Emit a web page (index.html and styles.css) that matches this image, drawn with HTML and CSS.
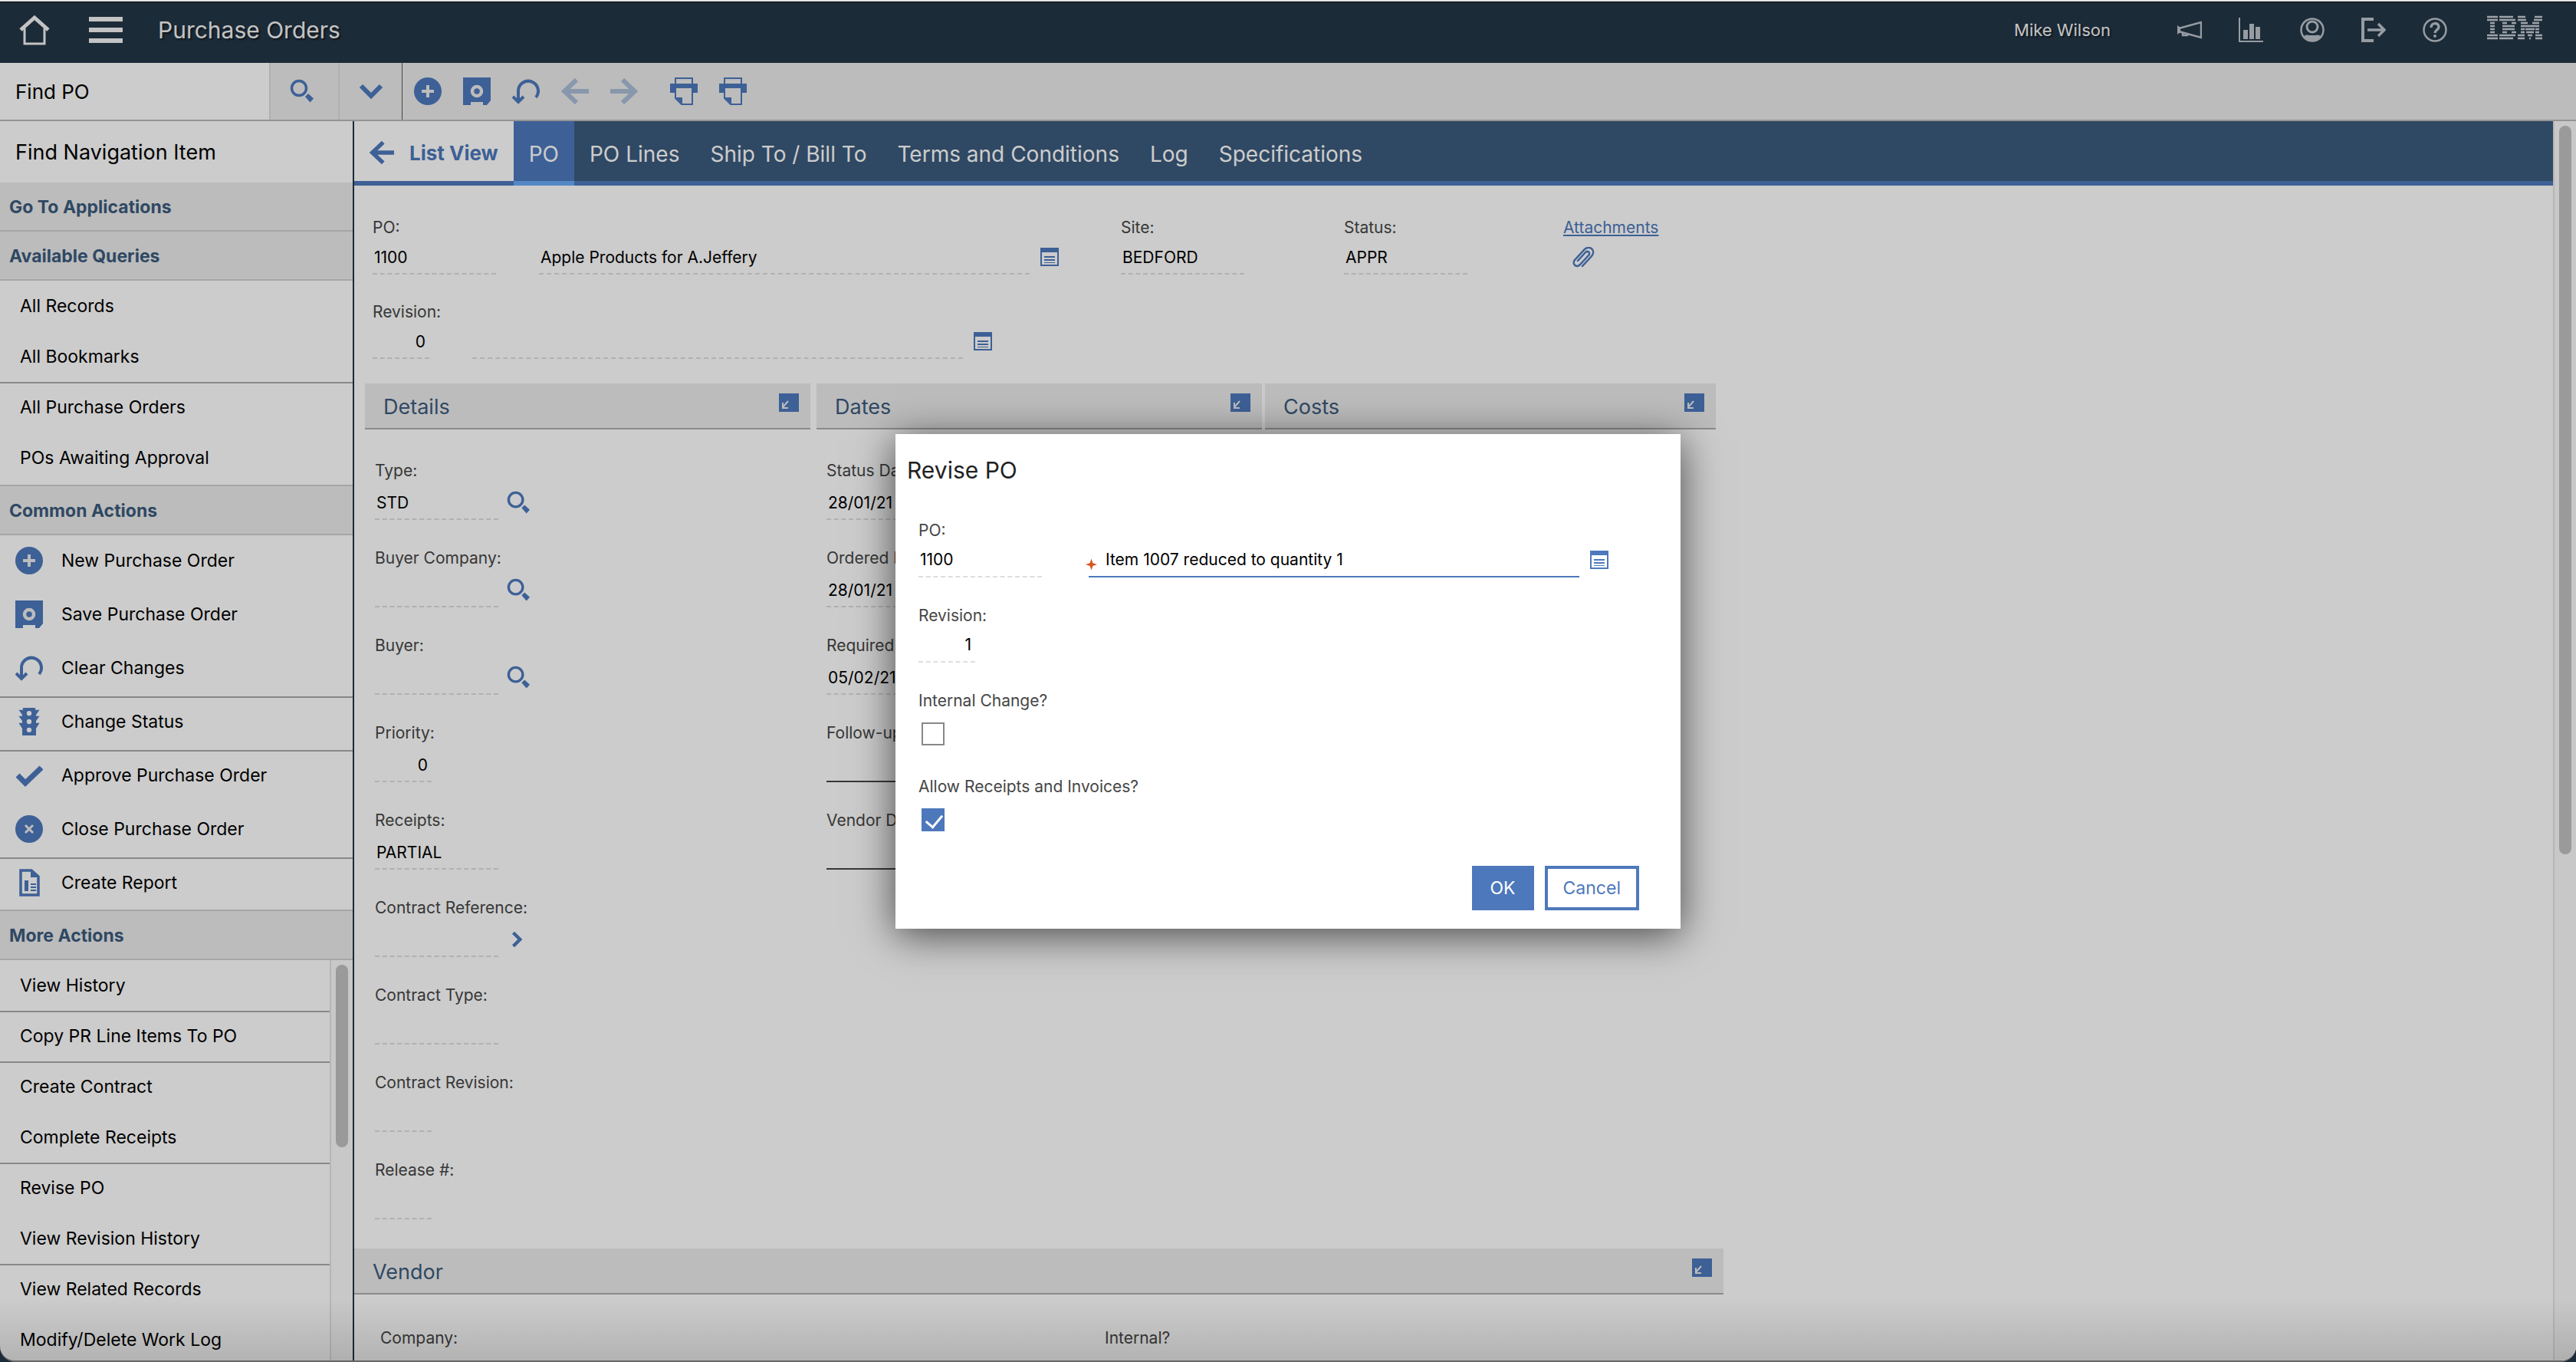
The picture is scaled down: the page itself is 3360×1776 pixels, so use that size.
FILE: index.html
```html
<!DOCTYPE html>
<html lang="en">
  <head>
    <meta charset="UTF-8" />
    <meta name="viewport" content="width=device-width, initial-scale=1.0" />
    <title>Purchase Orders</title>
    <link rel="stylesheet" href="styles.css">
  </head>
  <body>
    <!-- Shared icons -->
    <svg class="sprite" aria-hidden="true">
      <symbol id="i-home" viewBox="0 0 40 40"><path d="M7 18v20h26V18" fill="none" stroke="currentColor" stroke-width="3" /><path d="M2 20 20 4l18 16" fill="none" stroke="currentColor" stroke-width="5" /></symbol>
      <symbol id="i-menu" viewBox="0 0 44 36"><path d="M0 4h44M0 18h44M0 32h44" stroke="currentColor" stroke-width="6" /></symbol>
      <symbol id="i-search" viewBox="0 0 32 32"><circle cx="12" cy="12" r="9.5" fill="none" stroke="currentColor" stroke-width="3.5" /><path d="m20 23 4-4 7 6.500-4.500 5z" fill="currentColor" /></symbol>
      <symbol id="i-down" viewBox="0 0 32 32"><path d="m3 9 13 13L29 9" fill="none" stroke="currentColor" stroke-width="6" /></symbol>
      <symbol id="i-right" viewBox="0 0 20 20"><path d="m5 2 8 8-8 8" fill="none" stroke="currentColor" stroke-width="4" /></symbol>
      <symbol id="i-plus" viewBox="0 0 36 36"><circle cx="18" cy="18" r="18" fill="currentColor" /><path d="M18 10v16M10 18h16" stroke="#ececec" stroke-width="4" /></symbol>
      <symbol id="i-close" viewBox="0 0 36 36"><circle cx="18" cy="18" r="18" fill="currentColor" /><path d="m13 13 10 10M23 13 13 23" stroke="#ececec" stroke-width="3" /></symbol>
      <symbol id="i-safe" viewBox="0 0 36 36"><path d="M0 0h36v30l-5 6h-5v-4H10v4H0z" fill="currentColor" /><circle cx="18" cy="18" r="6" fill="none" stroke="#ececec" stroke-width="4.5" /></symbol>
      <symbol id="i-undo" viewBox="0 0 36 36"><path d="M8 32V17a13 13 0 1 1 23 9" fill="none" stroke="currentColor" stroke-width="4" /><path d="m1 25 7 7 7-7" fill="none" stroke="currentColor" stroke-width="4" /></symbol>
      <symbol id="i-back" viewBox="0 0 36 36"><path d="M36 18H4M20 3 4 18l16 15" fill="none" stroke="currentColor" stroke-width="6" /></symbol>
      <symbol id="i-forward" viewBox="0 0 36 36"><path d="M0 18h32M16 3l16 15-16 15" fill="none" stroke="currentColor" stroke-width="6" /></symbol>
      <symbol id="i-print" viewBox="0 0 36 36"><path d="M7 9V1h22v8" fill="none" stroke="currentColor" stroke-width="2" /><path d="M0 8h36v12h-6v-6H7v6H0z" fill="currentColor" /><path d="M7 14v13l8 8h14V14" fill="none" stroke="currentColor" stroke-width="2" /><path d="M7 26h9v9z" fill="currentColor" /></symbol>
      <symbol id="i-status" viewBox="0 0 36 40"><path d="M9 0h18v3h6l-5 7v2h5l-5 7v3h5l-5 8v10H8V30l-5-8h5v-3l-5-7h5v-2L3 3h6z" fill="currentColor" /><g fill="#fff"><circle cx="18" cy="8" r="3.500" /><circle cx="18" cy="20" r="3.500" /><circle cx="18" cy="32" r="3.500" /></g></symbol>
      <symbol id="i-check" viewBox="0 0 36 36"><path d="m3 18 10 10L34 8" fill="none" stroke="currentColor" stroke-width="7" /></symbol>
      <symbol id="i-report" viewBox="0 0 36 36"><path d="M7 2h14l9 8v24H7z" fill="none" stroke="currentColor" stroke-width="3.500" /><path d="M20 2v9h10zM12 15h5v14h-5zM20 19h7v2h-7zM20 23h7v2h-7zM20 27h7v2h-7z" fill="currentColor" /></symbol>
      <symbol id="i-note" viewBox="0 0 24 24"><path d="M1 1h22v22H1z" fill="none" stroke="currentColor" stroke-width="2" /><path d="M1 1h22v5H1zM5 11h14v2H5zM5 15h14v2H5zM5 19h14v1H5z" fill="currentColor" /></symbol>
      <symbol id="i-collapse" viewBox="0 0 26 24"><path d="M0 0h26v24H0z" fill="currentColor" /><path d="m12 10-7 8M5 12v7h7" fill="none" stroke="#ececec" stroke-width="2" /></symbol>
      <symbol id="i-clip" viewBox="0 0 30 30"><path d="m8 18 10-11c3-3 7 1 4 4L11 23c-5 5-11-1-7-6L17 3c7-6 15 2 9 9L14 25" fill="none" stroke="currentColor" stroke-width="2.500" stroke-linecap="round" /></symbol>
      <symbol id="i-megaphone" viewBox="0 0 32 32"><path d="M2 14 31 6v20L2 18z" fill="none" stroke="currentColor" stroke-width="2.500" /><path d="M0 10v12l4-3v-6z" fill="currentColor" /><path d="M7 19v4h6v-3" fill="none" stroke="currentColor" stroke-width="2.500" /></symbol>
      <symbol id="i-chart" viewBox="0 0 32 32"><path d="M1 0v31h31" fill="none" stroke="currentColor" stroke-width="2" /><path d="M6 16h6v12H6zM14 8h6v20h-6zM22 12h6v16h-6z" fill="currentColor" /></symbol>
      <symbol id="i-user" viewBox="0 0 32 32"><circle cx="16" cy="16" r="14.500" fill="none" stroke="currentColor" stroke-width="2.500" /><circle cx="16" cy="12" r="7" fill="none" stroke="currentColor" stroke-width="3" /><path d="M4 26c2-4 5-4 8-3h8c3-1 6-1 8 3-6 7-18 7-24 0z" fill="currentColor" /></symbol>
      <symbol id="i-logout" viewBox="0 0 32 32"><path d="M16 2H2v28h14" fill="none" stroke="currentColor" stroke-width="4" /><path d="M8 16h22M22 8l8 8-8 8" fill="none" stroke="currentColor" stroke-width="3.500" /></symbol>
      <symbol id="i-help" viewBox="0 0 32 32"><circle cx="16" cy="16" r="14.500" fill="none" stroke="currentColor" stroke-width="2.500" /><path d="M11 13c0-7 10-7 10-1 0 4-5 4-5 8" fill="none" stroke="currentColor" stroke-width="3.500" /><circle cx="16" cy="24" r="2" fill="currentColor" /></symbol>
      <symbol id="i-required" viewBox="0 0 16 16"><path d="m8 0 2 6 6 2-6 2-2 6-2-6-6-2 6-2z" fill="#d9541e" /></symbol>
    </svg>

    <div class="app">
      <header class="header">
        <button class="icon-btn header-btn" aria-label="Home"><svg class="home"><use href="#i-home" /></svg></button>
        <button class="icon-btn header-btn" aria-label="Menu"><svg class="menu"><use href="#i-menu" /></svg></button>
        <h1>Purchase Orders</h1>
        <span class="user-name">Mike Wilson</span>
        <div class="header-icons">
          <button class="icon-btn" aria-label="Bulletins"><svg><use href="#i-megaphone" /></svg></button>
          <button class="icon-btn" aria-label="Reports"><svg><use href="#i-chart" /></svg></button>
          <button class="icon-btn" aria-label="Profile"><svg><use href="#i-user" /></svg></button>
          <button class="icon-btn" aria-label="Sign out"><svg><use href="#i-logout" /></svg></button>
          <button class="icon-btn" aria-label="Help"><svg><use href="#i-help" /></svg></button>
        </div>
        <!-- eight-bar logo, one row per bar -->
        <svg class="logo" viewBox="0 0 72 32" role="img" aria-label="IBM">
          <path d="M0 2h14M16 2h18M40 2h10M62 2h10" />
          <path d="M0 6h14M16 6h21M40 6h11M61 6h11" />
          <path d="M4 10h6M20 10h6M32 10h6M44 10h9M59 10h9" />
          <path d="M4 14h6M20 14h16M44 14h24" />
          <path d="M4 18h6M20 18h16M44 18h5M50 18h12M63 18h5" />
          <path d="M4 22h6M20 22h6M32 22h6M44 22h5M51 22h10M63 22h5" />
          <path d="M0 26h14M16 26h21M40 26h9M53 26h6M63 26h9" />
          <path d="M0 30h14M16 30h18M40 30h9M55 30h2M63 30h9" />
        </svg>
      </header>

      <div class="toolbar">
        <input class="find" type="text" value="Find PO" aria-label="Find PO" />
        <button class="tool-btn search-btn" aria-label="Search"><svg><use href="#i-search" /></svg></button>
        <button class="tool-btn more-btn" aria-label="Search options"><svg><use href="#i-down" /></svg></button>
        <div class="tools">
          <button class="icon-btn" aria-label="New"><svg><use href="#i-plus" /></svg></button>
          <button class="icon-btn" aria-label="Save"><svg><use href="#i-safe" /></svg></button>
          <button class="icon-btn" aria-label="Clear"><svg><use href="#i-undo" /></svg></button>
          <button class="icon-btn" aria-label="Previous" disabled><svg><use href="#i-back" /></svg></button>
          <button class="icon-btn" aria-label="Next" disabled><svg><use href="#i-forward" /></svg></button>
        </div>
        <div class="tools">
          <button class="icon-btn" aria-label="Print"><svg><use href="#i-print" /></svg></button>
          <button class="icon-btn" aria-label="Print attachments"><svg><use href="#i-print" /></svg></button>
        </div>
      </div>

      <div class="body">
        <nav class="sidebar">
          <input class="find-nav" type="text" value="Find Navigation Item" aria-label="Find Navigation Item" />
          <h2 class="nav-title">Go To Applications</h2>
          <h2 class="nav-title">Available Queries</h2>
          <ul class="nav-list queries">
            <li><a href="#">All Records</a></li>
            <li><a href="#">All Bookmarks</a></li>
            <li class="split"><a href="#">All Purchase Orders</a></li>
            <li><a href="#">POs Awaiting Approval</a></li>
          </ul>
          <h2 class="nav-title top-line">Common Actions</h2>
          <ul class="nav-list actions">
            <li><a href="#"><svg><use href="#i-plus" /></svg>New Purchase Order</a></li>
            <li><a href="#"><svg><use href="#i-safe" /></svg>Save Purchase Order</a></li>
            <li><a href="#"><svg><use href="#i-undo" /></svg>Clear Changes</a></li>
            <li class="split"><a href="#"><svg><use href="#i-status" /></svg>Change Status</a></li>
            <li class="split"><a href="#"><svg><use href="#i-check" /></svg>Approve Purchase Order</a></li>
            <li><a href="#"><svg><use href="#i-close" /></svg>Close Purchase Order</a></li>
            <li class="split"><a href="#"><svg><use href="#i-report" /></svg>Create Report</a></li>
          </ul>
          <h2 class="nav-title top-line">More Actions</h2>
          <div class="more">
            <ul class="nav-list">
              <li><a href="#">View History</a></li>
              <li class="split"><a href="#">Copy PR Line Items To PO</a></li>
              <li class="split"><a href="#">Create Contract</a></li>
              <li><a href="#">Complete Receipts</a></li>
              <li class="split"><a href="#">Revise PO</a></li>
              <li><a href="#">View Revision History</a></li>
              <li class="split"><a href="#">View Related Records</a></li>
              <li><a href="#">Modify/Delete Work Log</a></li>
            </ul>
            <div class="scrollbar"><div class="thumb more-thumb"></div></div>
          </div>
        </nav>

        <main class="main">
          <div class="tabs">
            <a class="tab list-view" href="#"><svg><use href="#i-back" /></svg>List View</a>
            <a class="tab active" href="#">PO</a>
            <a class="tab" href="#">PO Lines</a>
            <a class="tab" href="#">Ship To / Bill To</a>
            <a class="tab" href="#">Terms and Conditions</a>
            <a class="tab" href="#">Log</a>
            <a class="tab" href="#">Specifications</a>
          </div>

          <div class="summary">
            <div class="row">
              <div class="field"><label for="po">PO:</label><input id="po" value="1100" readonly /></div>
              <div class="field-line po-desc">
                <input class="wide" value="Apple Products for A.Jeffery" aria-label="Description" readonly />
                <button class="icon-btn note" aria-label="Long description"><svg><use href="#i-note" /></svg></button>
              </div>
              <div class="field site"><label for="site">Site:</label><input id="site" value="BEDFORD" readonly /></div>
              <div class="field status"><label for="status">Status:</label><input id="status" value="APPR" readonly /></div>
              <div class="attachments">
                <a href="#">Attachments</a>
                <button class="icon-btn clip" aria-label="View attachments"><svg><use href="#i-clip" /></svg></button>
              </div>
            </div>
            <div class="row">
              <div class="field narrow"><label for="rev">Revision:</label><input id="rev" class="num" value="0" readonly /></div>
              <div class="field-line po-desc">
                <input class="wide" value="" aria-label="Revision description" readonly />
                <button class="icon-btn note" aria-label="Long description"><svg><use href="#i-note" /></svg></button>
              </div>
            </div>
          </div>

          <div class="sections">
            <section class="section details">
              <div class="section-head"><h2>Details</h2><button class="icon-btn collapse" aria-label="Collapse"><svg><use href="#i-collapse" /></svg></button></div>
              <div class="section-body">
                <div class="field"><label for="type">Type:</label><div class="field-line"><input id="type" value="STD" readonly /><button class="icon-btn lookup" aria-label="Select type"><svg><use href="#i-search" /></svg></button></div></div>
                <div class="field"><label for="company">Buyer Company:</label><div class="field-line"><input id="company" readonly /><button class="icon-btn lookup" aria-label="Select company"><svg><use href="#i-search" /></svg></button></div></div>
                <div class="field"><label for="buyer">Buyer:</label><div class="field-line"><input id="buyer" readonly /><button class="icon-btn lookup" aria-label="Select buyer"><svg><use href="#i-search" /></svg></button></div></div>
                <div class="field"><label for="priority">Priority:</label><input id="priority" class="num" value="0" readonly /></div>
                <div class="field"><label for="receipts">Receipts:</label><input id="receipts" value="PARTIAL" readonly /></div>
                <div class="field"><label for="contract">Contract Reference:</label><div class="field-line"><input id="contract" readonly /><button class="icon-btn go" aria-label="Contract menu"><svg><use href="#i-right" /></svg></button></div></div>
                <div class="field"><label for="ctype">Contract Type:</label><input id="ctype" readonly /></div>
                <div class="field"><label for="crev">Contract Revision:</label><input id="crev" class="num" readonly /></div>
                <div class="field"><label for="release">Release #:</label><input id="release" class="num" readonly /></div>
              </div>
            </section>
            <section class="section dates">
              <div class="section-head"><h2>Dates</h2><button class="icon-btn collapse" aria-label="Collapse"><svg><use href="#i-collapse" /></svg></button></div>
              <div class="section-body">
                <div class="field"><label for="sdate">Status Date:</label><input id="sdate" value="28/01/21" readonly /></div>
                <div class="field"><label for="odate">Ordered Date:</label><input id="odate" value="28/01/21" readonly /></div>
                <div class="field"><label for="rdate">Required Date:</label><input id="rdate" value="05/02/21" readonly /></div>
                <div class="field"><label for="fdate">Follow-up Date:</label><input id="fdate" class="editable" /></div>
                <div class="field"><label for="vdate">Vendor Date:</label><input id="vdate" class="editable" /></div>
              </div>
            </section>
            <section class="section costs">
              <div class="section-head"><h2>Costs</h2><button class="icon-btn collapse" aria-label="Collapse"><svg><use href="#i-collapse" /></svg></button></div>
            </section>
          </div>

          <section class="vendor">
            <div class="section-head"><h2>Vendor</h2><button class="icon-btn collapse" aria-label="Collapse"><svg><use href="#i-collapse" /></svg></button></div>
            <div class="vendor-body">
              <div class="field"><label for="vcompany">Company:</label><input id="vcompany" readonly /></div>
              <div class="field"><label for="internal">Internal?</label><input id="internal" readonly /></div>
            </div>
          </section>
        </main>
        <div class="scrollbar page-scroll"><div class="thumb page-thumb"></div></div>
      </div>

      <div class="fade"></div>

      <!-- Revise PO dialog -->
      <div class="overlay">
        <form class="dialog" role="dialog" aria-labelledby="dialog-title">
          <h2 id="dialog-title">Revise PO</h2>
          <div class="dialog-body">
            <div class="row">
              <div class="field"><label for="d-po">PO:</label><input id="d-po" value="1100" readonly /></div>
              <div class="field-line d-desc">
                <svg class="required"><use href="#i-required" /></svg>
                <input class="wide focused" value="Item 1007 reduced to quantity 1" aria-label="Revision description" />
                <button type="button" class="icon-btn note" aria-label="Long description"><svg><use href="#i-note" /></svg></button>
              </div>
            </div>
            <div class="field"><label for="d-rev">Revision:</label><input id="d-rev" class="num" value="1" readonly /></div>
            <div class="check"><label for="d-internal">Internal Change?</label><input type="checkbox" id="d-internal" /></div>
            <div class="check"><label for="d-allow">Allow Receipts and Invoices?</label><input type="checkbox" id="d-allow" checked /></div>
          </div>
          <div class="dialog-buttons">
            <button type="button" class="btn btn-ok">OK</button>
            <button type="button" class="btn btn-cancel">Cancel</button>
          </div>
        </form>
      </div>
    </div>
  </body>
</html>
```
FILE: styles.css
```css
* {
  margin: 0;
  padding: 0;
  box-sizing: border-box;
}

body {
  font-family: Inter, 'Liberation Sans', sans-serif;
  font-size: 21px;
  color: #000;
  background: #1c2b39;
  border-top: 2px solid #e5e5e5;
  height: 100vh;
  overflow: hidden;
}

.sprite {
  position: absolute;
  width: 0;
  height: 0;
}

button,
input {
  font: inherit;
  color: inherit;
  border: none;
  background: none;
  border-radius: 0;
}

a {
  color: inherit;
  text-decoration: none;
}

ul {
  list-style: none;
}

svg {
  display: block;
}

.icon-btn {
  flex: none;
  cursor: pointer;
}

.app {
  position: relative;
  display: flex;
  flex-direction: column;
  height: 100%;
  overflow: hidden;
  background: #fff;
  border-bottom: 2px solid #666;
  border-radius: 0 0 20px 20px;
}

/* header */
.header {
  display: flex;
  align-items: center;
  height: 80px;
  padding: 0 44px 8px 25px;
  background: #233647;
  border-top: 1px solid #000;
  color: #f4f4f4;
  flex: none;
}

.header-btn {
  margin-right: 51px;
}

.home {
  width: 40px;
  height: 40px;
}

.menu {
  width: 44px;
  height: 36px;
}

.header h1 {
  font-size: 30px;
  font-weight: 400;
  margin-left: -5px;
  text-shadow: 2px 2px 2px rgba(0, 0, 0, 0.5);
}

.user-name {
  margin-left: auto;
  font-size: 22px;
  text-shadow: 2px 2px 2px rgba(0, 0, 0, 0.5);
}

.header-icons {
  display: flex;
  gap: 48px;
  margin: 0 52px 0 87px;
  color: #bcc3ca;
}

.header-icons svg {
  width: 32px;
  height: 32px;
}

.logo {
  width: 72px;
  height: 32px;
  margin-bottom: 6px;
}

.logo path {
  stroke: #c6ccd2;
  stroke-width: 2.5;
}

/* toolbar */
.toolbar {
  display: flex;
  height: 76px;
  background: #ececec;
  border-bottom: 2px solid #bababa;
  color: #4d78bc;
  flex: none;
}

.find {
  width: 351px;
  padding: 0 20px;
  background: #fff;
  color: #000;
  font-size: 26px;
}

.tool-btn {
  display: flex;
  align-items: center;
  justify-content: center;
  border-left: 2px solid #ddd;
  cursor: pointer;
}

.tool-btn svg {
  width: 32px;
  height: 32px;
}

.search-btn {
  width: 90px;
  padding-right: 6px;
}

.more-btn {
  width: 84px;
  border-right: 1px solid #555;
}

.tools {
  display: flex;
  align-items: center;
  gap: 28px;
  padding-left: 15px;
}

.tools + .tools {
  padding-left: 42px;
}

.tools svg {
  width: 36px;
  height: 36px;
}

.tools button:disabled {
  opacity: 0.4;
}

.body {
  display: flex;
  flex: 1;
  min-height: 0;
}

/* sidebar */
.sidebar {
  display: flex;
  flex-direction: column;
  width: 462px;
  border-right: 2px solid #233647;
  flex: none;
}

.find-nav {
  width: 100%;
  height: 80px;
  padding: 0 20px;
  font-size: 27px;
  flex: none;
}

.nav-title {
  height: 64px;
  padding-left: 12px;
  line-height: 64px;
  font-size: 23px;
  font-weight: 700;
  color: #3b5b7c;
  background: #ececec;
  border-bottom: 2px solid #d0d0d0;
  flex: none;
}

.nav-title.top-line {
  height: 66px;
  border-top: 2px solid #d0d0d0;
}

.nav-list {
  flex: 1;
  font-size: 23px;
}

.nav-list li {
  height: 66px;
}

.nav-list a {
  display: flex;
  align-items: center;
  height: 66px;
  padding-left: 26px;
}

.nav-list .split {
  border-top: 2px solid #aaa;
}

.nav-list .split a {
  height: 62px;
}

.queries {
  flex: none;
  padding-bottom: 2px;
}

.actions {
  flex: none;
}

.actions li {
  height: 70px;
}

.actions li:last-child {
  height: 68px;
}

.actions a {
  padding-left: 20px;
  gap: 24px;
}

.actions svg {
  width: 36px;
  height: 36px;
  color: #4d78bc;
}

.more {
  display: flex;
  flex: 1;
  min-height: 0;
  overflow: hidden;
}

.scrollbar {
  width: 30px;
  padding: 6px 6px 0;
  background: #fafafa;
  border-left: 2px solid #e4e4e4;
  flex: none;
}

.thumb {
  width: 16px;
  border-radius: 8px;
  background: #c1c1c1;
}

.more-thumb {
  height: 238px;
}

.page-thumb {
  height: 59%;
}

/* main */
.main {
  flex: 1;
  min-width: 0;
  overflow: hidden;
}

.tabs {
  display: flex;
  height: 84px;
  background: #3b5b7c;
  border-bottom: 6px solid #4d78bc;
  color: #fff;
  font-size: 28px;
}

.tab {
  display: flex;
  align-items: center;
  height: 78px;
  padding: 8px 20px 0;
}

.tab.list-view {
  gap: 20px;
  padding-top: 4px;
  background: #fff;
  color: #4d78bc;
  font-weight: 700;
  font-size: 26px;
}

.list-view svg {
  width: 32px;
  height: 32px;
}

.tab.active {
  height: 84px;
  background: #4d78bc;
  border-bottom: 6px solid #6aaaf5;
}

.summary {
  display: flex;
  flex-direction: column;
  gap: 34px;
  padding: 40px 24px 32px;
}

.row {
  display: flex;
  align-items: flex-end;
}

.field {
  display: flex;
  flex-direction: column;
  align-items: flex-start;
}

.field.narrow {
  width: 74px;
}

label {
  line-height: 30px;
  color: #464646;
  white-space: nowrap;
}

.field input,
.field-line input {
  width: 161px;
  height: 46px;
  padding: 2px 2px 0;
  border-bottom: 2px dashed #dedede;
}

.field input.num {
  width: 74px;
  padding-right: 5px;
  text-align: right;
}

.field-line {
  display: flex;
  align-items: center;
}

.field-line input.wide {
  width: 640px;
}

.po-desc {
  margin-left: 56px;
}

.note {
  margin-left: 14px;
  color: #4d78bc;
}

.note svg {
  width: 24px;
  height: 24px;
}

.site {
  margin-left: 81px;
}

.status {
  margin-left: 130px;
}

.attachments {
  align-self: flex-start;
  margin-left: 125px;
  line-height: 30px;
  color: #4d78bc;
}

.attachments a {
  text-decoration: underline;
}

.clip {
  display: block;
  margin: 10px 0 0 11px;
}

.clip svg {
  width: 30px;
  height: 30px;
}

.sections {
  display: flex;
  padding-left: 14px;
}

.section {
  width: 581px;
  flex: none;
}

.dates {
  margin: 0 4px 0 8px;
}

.costs {
  width: 588px;
}

.section-head {
  display: flex;
  justify-content: space-between;
  height: 60px;
  padding: 0 15px 0 24px;
  background: #ececec;
  border-bottom: 2px solid #aeaeae;
  color: #3b5b7c;
}

.section-head h2 {
  font-size: 27px;
  font-weight: 400;
  line-height: 62px;
}

.collapse {
  height: 24px;
  margin-top: 13px;
  color: #4d78bc;
}

.collapse svg {
  width: 26px;
  height: 24px;
}

.section-body {
  display: flex;
  flex-direction: column;
  gap: 35px;
  padding: 39px 13px 38px;
}

.section-body .field {
  gap: 3px;
}

.field input.editable {
  border-bottom: 2px solid #464646;
}

.lookup,
.go {
  margin-left: 11px;
  color: #4d78bc;
}

.lookup svg {
  width: 31px;
  height: 31px;
}

.go svg {
  width: 28px;
  height: 22px;
}

.vendor {
  width: 1786px;
}

.vendor-body {
  display: grid;
  grid-template-columns: 945px 1fr;
  padding: 42px 34px 0;
}

/* shade along the bottom edge of the window */
.fade {
  position: absolute;
  left: 0;
  right: 0;
  bottom: 0;
  height: 80px;
  background: linear-gradient(rgba(0, 0, 0, 0), rgba(0, 0, 0, 0.12));
}

/* dialog */
.overlay {
  position: absolute;
  inset: 0;
  display: flex;
  align-items: center;
  justify-content: center;
  background: rgba(0, 0, 0, 0.2);
}

.dialog {
  display: flex;
  flex-direction: column;
  width: 1024px;
  background: #fff;
  box-shadow: 0 8px 50px rgba(0, 0, 0, 0.65);
}

.dialog h2 {
  padding: 27px 15px 0;
  font-size: 30px;
  font-weight: 400;
  line-height: 40px;
  color: #222;
}

.dialog-body {
  display: flex;
  flex-direction: column;
  gap: 35px;
  padding: 44px 30px 0;
}

.d-desc {
  position: relative;
  margin-left: 61px;
}

.required {
  position: absolute;
  left: -4px;
  bottom: 8px;
  width: 15px;
  height: 18px;
}

.field-line input.focused {
  padding-left: 22px;
  border-bottom: 2px solid #4d78bc;
}

.check {
  display: flex;
  flex-direction: column;
  align-items: flex-start;
  gap: 13px;
}

.check input {
  appearance: none;
  width: 30px;
  height: 30px;
  margin: 0 0 4px 4px;
  border: 2px solid #888;
}

.check input:checked {
  position: relative;
  background: #4d78bc;
  border-color: #4d78bc;
}

.check input:checked::after {
  content: '';
  position: absolute;
  left: 8px;
  top: 2px;
  width: 10px;
  height: 18px;
  border: solid #fff;
  border-width: 0 3px 3px 0;
  transform: rotate(40deg);
}

.dialog-buttons {
  display: flex;
  justify-content: flex-end;
  gap: 14px;
  padding: 41px 54px 24px;
}

.btn {
  height: 58px;
  padding: 0 20px;
  border: 4px solid #4d78bc;
  font-size: 23px;
  cursor: pointer;
}

.btn-ok {
  background: #4d78bc;
  color: #fff;
}

.btn-cancel {
  background: #fff;
  color: #4d78bc;
}
```
